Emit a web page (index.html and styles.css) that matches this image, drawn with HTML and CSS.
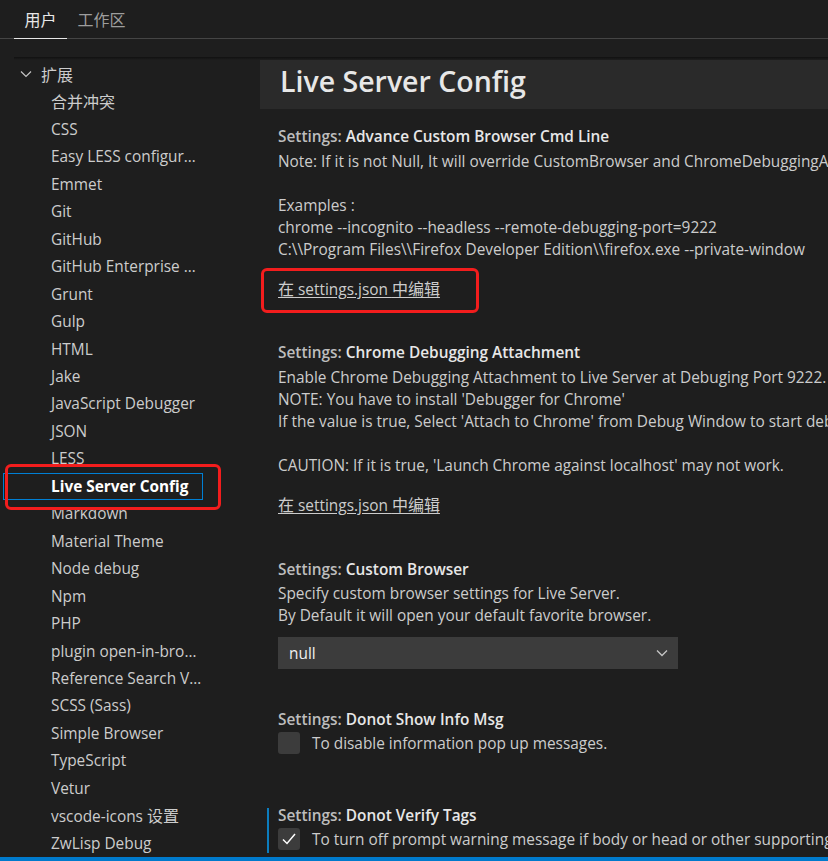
FILE: index.html
```html
<!DOCTYPE html>
<html lang="zh-CN">
<head>
<meta charset="utf-8">
<title>Settings</title>
<link rel="stylesheet" href="styles.css">
</head>
<body>
<div class="app">
  <div class="tabs">
    <div class="tab active"><span class="cjk">用户</span></div>
    <div class="tab"><span class="cjk">工作区</span></div>
  </div>
  <div class="main">
    <nav class="tree">
      <div class="row group">
        <svg class="twistie" width="12" height="8" viewBox="0 0 12 8"><polyline points="1,1.5 6,6.5 11,1.5" fill="none" stroke="#c5c5c5" stroke-width="1.2"/></svg>
        <span class="cjk">扩展</span>
      </div>
      <div class="row"><span class="cjk">合并冲突</span></div>
      <div class="row">CSS</div>
      <div class="row">Easy LESS configuration</div>
      <div class="row">Emmet</div>
      <div class="row">Git</div>
      <div class="row">GitHub</div>
      <div class="row">GitHub Enterprise Server</div>
      <div class="row">Grunt</div>
      <div class="row">Gulp</div>
      <div class="row">HTML</div>
      <div class="row">Jake</div>
      <div class="row">JavaScript Debugger</div>
      <div class="row">JSON</div>
      <div class="row">LESS</div>
      <div class="row selected">Live Server Config</div>
      <div class="row">Markdown</div>
      <div class="row">Material Theme</div>
      <div class="row">Node debug</div>
      <div class="row">Npm</div>
      <div class="row">PHP</div>
      <div class="row">plugin open-in-browser</div>
      <div class="row">Reference Search View</div>
      <div class="row">SCSS (Sass)</div>
      <div class="row">Simple Browser</div>
      <div class="row">TypeScript</div>
      <div class="row">Vetur</div>
      <div class="row">vscode-icons <span class="cjk">设置</span></div>
      <div class="row">ZwLisp Debug</div>
    </nav>
    <section class="content">
      <div class="header"><h1>Live Server Config</h1></div>

      <div class="setting first">
        <div class="title"><span class="cat">Settings: </span><span class="label">Advance Custom Browser Cmd Line</span></div>
        <div class="desc">
          <p>Note: If it is not Null, It will override CustomBrowser and ChromeDebuggingAttachment.</p>
          <p>&nbsp;</p>
          <p>Examples :</p>
          <p>chrome --incognito --headless --remote-debugging-port=9222</p>
          <p>C:\\Program Files\\Firefox Developer Edition\\firefox.exe --private-window</p>
        </div>
        <a class="edit" href="#"><span class="cjk">在</span> settings.json <span class="cjk">中编辑</span></a>
      </div>

      <div class="setting">
        <div class="title"><span class="cat">Settings: </span><span class="label">Chrome Debugging Attachment</span></div>
        <div class="desc">
          <p>Enable Chrome Debugging Attachment to Live Server at Debuging Port 9222.</p>
          <p>NOTE: You have to install 'Debugger for Chrome'</p>
          <p>If the value is true, Select 'Attach to Chrome' from Debug Window to start debugging.</p>
          <p>&nbsp;</p>
          <p>CAUTION: If it is true, 'Launch Chrome against localhost' may not work.</p>
        </div>
        <a class="edit" href="#"><span class="cjk">在</span> settings.json <span class="cjk">中编辑</span></a>
      </div>

      <div class="setting gap-m">
        <div class="title"><span class="cat">Settings: </span><span class="label">Custom Browser</span></div>
        <div class="desc tight">
          <p>Specify custom browser settings for Live Server.</p>
          <p>By Default it will open your default favorite browser.</p>
        </div>
        <div class="select">
          <span>null</span>
          <svg width="12" height="8" viewBox="0 0 12 8"><polyline points="1,1.5 6,6.5 11,1.5" fill="none" stroke="#c5c5c5" stroke-width="1.3"/></svg>
        </div>
      </div>

      <div class="setting gap-s">
        <div class="title"><span class="cat">Settings: </span><span class="label">Donot Show Info Msg</span></div>
        <div class="check-row">
          <span class="checkbox"></span>
          <span>To disable information pop up messages.</span>
        </div>
      </div>

      <div class="setting gap-l modified">
        <div class="title"><span class="cat">Settings: </span><span class="label">Donot Verify Tags</span></div>
        <div class="check-row">
          <span class="checkbox">
            <svg width="22" height="22" viewBox="0 0 22 22"><polyline points="5,11.5 9,15.5 17,6" fill="none" stroke="#ffffff" stroke-width="1.5"/></svg>
          </span>
          <span>To turn off prompt warning message if body or head or other supporting tags are missing.</span>
        </div>
      </div>
    </section>
  </div>
  <div class="status"></div>
</div>
<div class="scroll-shadow"></div>
<div class="mark mark-nav"></div>
<div class="mark mark-link"></div>
</body>
</html>
```

FILE: styles.css
```css
* {
  box-sizing: border-box;
  margin: 0;
  padding: 0;
}

html,
body {
  width: 828px;
  height: 861px;
  overflow: hidden;
  background: #1e1e1e;
}

body {
  position: relative;
  font-family: "Open Sans", "Noto Sans CJK SC", sans-serif;
  font-size: 15.4px;
  color: #cccccc;
}

.cjk {
  font-family: "Noto Sans CJK SC", sans-serif;
  font-size: 16px;
}

.app {
  display: flex;
  flex-direction: column;
  height: 861px;
}

/* tabs */
.tabs {
  display: flex;
  height: 39px;
  padding-left: 14px;
  border-bottom: 1px solid #454545;
  flex: none;
}

.tab {
  height: 39px;
  margin-bottom: -1px;
  padding: 0 10.5px;
  line-height: 38px;
  color: #9d9d9d;
  border-bottom: 1px solid transparent;
}

.tab.active {
  color: #e7e7e7;
  border-bottom-color: #e7e7e7;
}

/* main */
.main {
  flex: 1;
  display: flex;
  margin-top: 18px;
  min-height: 0;
  overflow: hidden;
}

.tree {
  flex: none;
  width: 200px;
  margin-left: 3px;
  padding-top: 4px;
}

.row {
  height: 27.46px;
  line-height: 27.46px;
  padding-left: 48px;
  padding-right: 0;
  white-space: nowrap;
  overflow: hidden;
  text-overflow: ellipsis;
  color: #cccccc;
}

.row.group {
  display: flex;
  align-items: center;
  padding-left: 17px;
}

.twistie {
  margin-right: 9px;
  margin-top: -2px;
}

.row.selected {
  font-weight: 700;
  color: #ffffff;
  outline: 1px solid #007fd4;
  outline-offset: -1px;
}

/* content */
.content {
  flex: 1;
  margin-left: 57px;
  padding-top: 3px;
  overflow: hidden;
  white-space: nowrap;
}

.header {
  height: 49px;
  padding-left: 20px;
  background: #2a2a2a;
}

.header h1 {
  font-size: 28.5px;
  font-weight: 600;
  line-height: 43px;
  color: #e7e7e7;
}

.setting {
  position: relative;
  padding-left: 18px;
  margin-top: 41px;
}

.setting.first {
  margin-top: 17px;
}

.setting.gap-m {
  margin-top: 42px;
}

.setting.gap-s {
  margin-top: 40px;
}

.setting.gap-l {
  margin-top: 51px;
}

.setting.modified::before {
  content: "";
  position: absolute;
  left: 7px;
  top: 3px;
  bottom: -3px;
  width: 2px;
  background: #0c7dbe;
}

.title {
  line-height: 22px;
  font-weight: 600;
}

.title .cat {
  color: #bdbdbd;
}

.title .label {
  color: #e7e7e7;
}

.desc {
  margin-top: 3px;
  line-height: 22px;
  color: #cccccc;
}

.desc.tight {
  margin-top: 2px;
}

.edit {
  display: inline-block;
  margin-top: 16px;
  line-height: 22px;
  color: #cccccc;
  text-decoration: underline;
  text-underline-offset: 2px;
}

.select {
  display: flex;
  align-items: center;
  justify-content: space-between;
  width: 400px;
  height: 32px;
  margin-top: 10px;
  padding: 0 10px 0 11px;
  background: #3c3c3c;
  color: #f0f0f0;
}

.check-row {
  display: flex;
  align-items: center;
  gap: 12px;
  margin-top: 1px;
  height: 22px;
  color: #cccccc;
}

.checkbox {
  flex: none;
  width: 22px;
  height: 22px;
  border-radius: 3px;
  background: #3c3c3c;
  display: flex;
}

.status {
  flex: none;
  height: 4px;
  background: #007acc;
}

/* overlays */
.scroll-shadow {
  position: absolute;
  left: 14px;
  right: 0;
  top: 57px;
  height: 3px;
  background: linear-gradient(#111111, rgba(17, 17, 17, 0));
}

.mark {
  position: absolute;
  border: 3px solid #f21d1d;
  border-radius: 6px;
}

.mark-nav {
  left: 5px;
  top: 464px;
  width: 216px;
  height: 46px;
}

.mark-link {
  left: 261px;
  top: 268px;
  width: 218px;
  height: 45px;
}
```
